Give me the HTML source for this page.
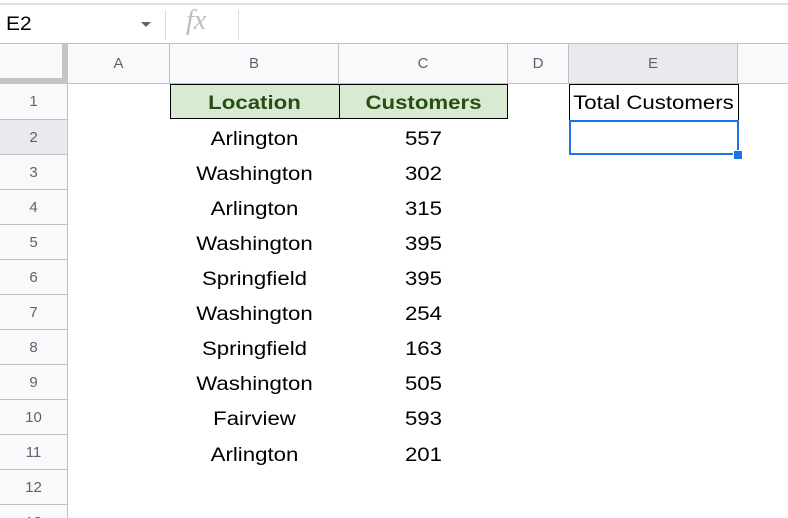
<!DOCTYPE html><html><head><style>
html,body{margin:0;width:788px;height:518px;overflow:hidden}
body{background:#fff;font-family:"Liberation Sans",Arial,sans-serif;position:relative}
.a{position:absolute}
.ch{position:absolute;top:44px;height:40px;background:#f8f9fa;border-right:1px solid #c0c0c0;border-bottom:1px solid #c0c0c0;box-sizing:border-box;color:#5f6368;font-size:15px;text-align:center;line-height:40px}
.rh{position:absolute;left:0;width:68px;background:#f8f9fa;border-right:1px solid #c0c0c0;border-bottom:1px solid #c0c0c0;box-sizing:border-box;color:#5f6368;font-size:15px;text-align:center}
.c{position:absolute;font-size:19px;color:#000;text-align:center;line-height:35px;height:35px;transform:scaleX(1.17)}
</style></head><body>
<div class="a" style="left:0;top:3px;width:788px;height:2px;background:#e0e0e0"></div>
<div class="a" style="left:6px;top:14px;font-size:19px;color:#000;transform:scaleX(1.1);transform-origin:left">E2</div>
<div class="a" style="left:141px;top:22px;width:0;height:0;border-left:5px solid transparent;border-right:5px solid transparent;border-top:5px solid #5f6368"></div>
<div class="a" style="left:165px;top:10px;width:1px;height:30px;background:#dadce0"></div>
<div class="a" style="left:186px;top:5px;font-family:'Liberation Serif',serif;font-style:italic;font-size:28px;color:#bdbdbd">fx</div>
<div class="a" style="left:238px;top:10px;width:1px;height:30px;background:#dadce0"></div>
<div class="a" style="left:0;top:43px;width:788px;height:1px;background:#c0c0c0"></div>
<div class="ch" style="left:0;width:68px"></div>
<div class="a" style="left:62px;top:44px;width:6px;height:40px;background:#c4c4c4"></div>
<div class="a" style="left:0;top:78px;width:68px;height:6px;background:#c4c4c4"></div>
<div class="ch" style="left:68px;width:102px">A</div>
<div class="ch" style="left:170px;width:169px">B</div>
<div class="ch" style="left:339px;width:169px">C</div>
<div class="ch" style="left:508px;width:61px">D</div>
<div class="ch" style="left:569px;width:169px;background:#e8eaed">E</div>
<div class="ch" style="left:738px;width:60px"></div>
<div class="rh" style="top:84px;height:36px;line-height:36px">1</div>
<div class="rh" style="top:120px;height:35px;line-height:35px;background:#e8eaed">2</div>
<div class="rh" style="top:155px;height:35px;line-height:35px">3</div>
<div class="rh" style="top:190px;height:35px;line-height:35px">4</div>
<div class="rh" style="top:225px;height:35px;line-height:35px">5</div>
<div class="rh" style="top:260px;height:35px;line-height:35px">6</div>
<div class="rh" style="top:295px;height:35px;line-height:35px">7</div>
<div class="rh" style="top:330px;height:35px;line-height:35px">8</div>
<div class="rh" style="top:365px;height:35px;line-height:35px">9</div>
<div class="rh" style="top:400px;height:35px;line-height:35px">10</div>
<div class="rh" style="top:435px;height:35px;line-height:35px">11</div>
<div class="rh" style="top:470px;height:35px;line-height:35px">12</div>
<div class="rh" style="top:505px;height:35px;line-height:35px">13</div>
<div class="a" style="left:170px;top:84px;width:338px;height:35px;background:#d9ead3;border:1px solid #000;box-sizing:border-box"></div>
<div class="a" style="left:339px;top:84px;width:1px;height:35px;background:#000"></div>
<div class="c" style="left:170px;top:86px;width:169px;font-weight:bold;color:#274e13">Location</div>
<div class="c" style="left:339px;top:86px;width:169px;font-weight:bold;color:#274e13">Customers</div>
<div class="a" style="left:569px;top:84px;width:170px;height:37px;border:1px solid #000;border-bottom:none;box-sizing:border-box"></div>
<div class="c" style="left:569px;top:86px;width:169px">Total Customers</div>
<div class="a" style="left:569px;top:120px;width:170px;height:35px;border:2px solid #1a73e8;box-sizing:border-box"></div>
<div class="a" style="left:733px;top:150px;width:8px;height:8px;background:#1a73e8;border:1px solid #fff"></div>
<div class="c" style="left:170px;top:122px;width:169px">Arlington</div><div class="c" style="left:339px;top:122px;width:169px">557</div>
<div class="c" style="left:170px;top:157px;width:169px">Washington</div><div class="c" style="left:339px;top:157px;width:169px">302</div>
<div class="c" style="left:170px;top:192px;width:169px">Arlington</div><div class="c" style="left:339px;top:192px;width:169px">315</div>
<div class="c" style="left:170px;top:227px;width:169px">Washington</div><div class="c" style="left:339px;top:227px;width:169px">395</div>
<div class="c" style="left:170px;top:262px;width:169px">Springfield</div><div class="c" style="left:339px;top:262px;width:169px">395</div>
<div class="c" style="left:170px;top:297px;width:169px">Washington</div><div class="c" style="left:339px;top:297px;width:169px">254</div>
<div class="c" style="left:170px;top:332px;width:169px">Springfield</div><div class="c" style="left:339px;top:332px;width:169px">163</div>
<div class="c" style="left:170px;top:367px;width:169px">Washington</div><div class="c" style="left:339px;top:367px;width:169px">505</div>
<div class="c" style="left:170px;top:402px;width:169px">Fairview</div><div class="c" style="left:339px;top:402px;width:169px">593</div>
<div class="c" style="left:170px;top:438px;width:169px">Arlington</div><div class="c" style="left:339px;top:438px;width:169px">201</div>
</body></html>
